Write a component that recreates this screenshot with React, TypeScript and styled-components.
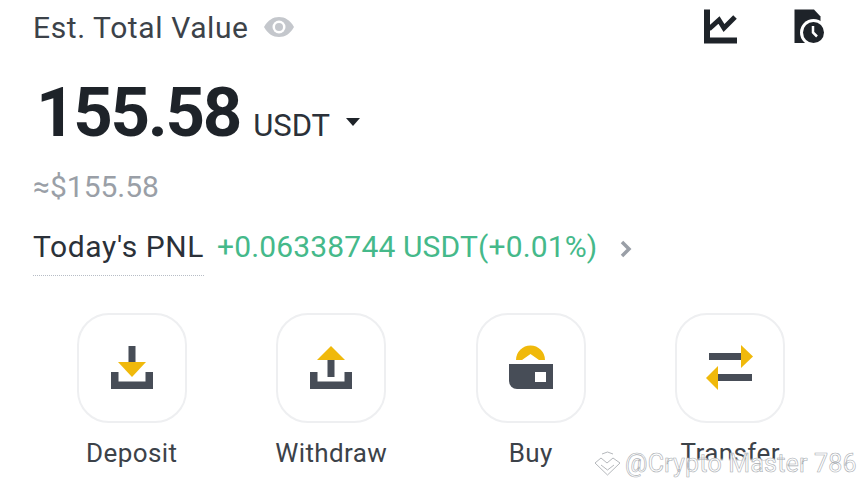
import styled, { createGlobalStyle } from "styled-components";

const GlobalStyle = createGlobalStyle`
  html, body {
    margin: 0;
    padding: 0;
    background: #fff;
  }
`;

const Page = styled.div`
  position: relative;
  width: 863px;
  height: 485px;
  overflow: hidden;
  font-family: Roboto, sans-serif;
  color: #1e2329;
`;

const Header = styled.div`
  display: flex;
  align-items: center;
  height: 56px;
  padding-left: 33px;
`;

const Title = styled.div`
  font-size: 30px;
  line-height: 56px;
  color: #3c4249;
  letter-spacing: 0.6px;
`;

const EyeIcon = styled.svg`
  width: 32px;
  height: 24px;
  margin: 0 0 2px 14px;
`;

const HeaderIcons = styled.div`
  display: flex;
  gap: 53px;
  margin: 0 0 2px auto;
  padding-right: 35px;
`;

const HeaderIcon = styled.svg`
  width: 36px;
  height: 36px;
`;

const BalanceRow = styled.div`
  display: flex;
  align-items: baseline;
  height: 84px;
  padding: 15px 0 0 36px;
`;

const Balance = styled.div`
  font-size: 69px;
  line-height: 84px;
  font-weight: 700;
  letter-spacing: -2.3px;
`;

const Unit = styled.div`
  font-size: 31px;
  margin-left: 13px;
  color: #2b3139;
`;

const Caret = styled.svg`
  align-self: flex-start;
  width: 16px;
  height: 10px;
  margin: 46px 0 0 15px;
`;

const Fiat = styled.div`
  margin: 11px 0 0 33px;
  font-size: 30px;
  line-height: 42px;
  color: #9a9fa7;
`;

const PnlRow = styled.div`
  display: flex;
  align-items: flex-start;
  margin: 17px 0 0 33px;
`;

const PnlLabel = styled.div`
  padding-bottom: 6px;
  font-size: 30px;
  line-height: 44px;
  letter-spacing: 0.6px;
  border-bottom: 1px dotted #b7bdc6;
  color: #2b3139;
`;

const PnlValue = styled.div`
  margin-left: 13px;
  font-size: 30px;
  line-height: 44px;
  letter-spacing: 0.15px;
  color: #45b98a;
`;

const Chevron = styled.svg`
  width: 14px;
  height: 18px;
  margin: 15px 0 0 22px;
`;

const Actions = styled.div`
  display: grid;
  grid-template-columns: repeat(4, 199.5px);
  margin: 37px 0 0 32px;
`;

const Action = styled.div`
  display: flex;
  flex-direction: column;
  align-items: center;
`;

const ActionButton = styled.div`
  display: flex;
  align-items: center;
  justify-content: center;
  box-sizing: border-box;
  width: 110px;
  height: 110px;
  border: 2px solid #eeeff1;
  border-radius: 32px;
`;

const ActionIcon = styled.svg`
  width: 50px;
  height: 50px;
`;

const ActionLabel = styled.div`
  margin-top: 12px;
  font-size: 26px;
  line-height: 36px;
  color: #3c4249;
  letter-spacing: 0.4px;
`;

const Watermark = styled.div`
  position: absolute;
  left: 593px;
  top: 449px;
  display: flex;
  align-items: center;
  gap: 3px;
`;

const WatermarkText = styled.div`
  font-size: 25px;
  line-height: 30px;
  color: rgba(255, 255, 255, 0.9);
  -webkit-text-stroke: 0.6px #a9adb2;
  background: linear-gradient(to bottom, transparent 9px, #fff 12px);
  letter-spacing: 0.2px;
  white-space: nowrap;
`;

const WatermarkLogo = styled.svg`
  width: 29px;
  height: 26px;
`;

const DARK = "#474d57";
const GOLD = "#f0b90b";

const TRAY = "M4 29h7.500v9.500h27V29H46v17H4z";

const actions = [
  {
    label: "Deposit",
    icon: (
      <>
        <rect x="21.500" y="3" width="7" height="17" fill={DARK} />
        <path d={TRAY} fill={DARK} />
        <path d="M11 19h28L25 34z" fill={GOLD} />
      </>
    ),
  },
  {
    label: "Withdraw",
    icon: (
      <>
        <rect x="21.500" y="16" width="7" height="18" fill={DARK} />
        <path d={TRAY} fill={DARK} />
        <path d="M11 17h28L25 3z" fill={GOLD} />
      </>
    ),
  },
  {
    label: "Buy",
    icon: (
      <>
        <path d="M10 17a14.500 14.500 0 0 1 29 0h-6l-8.500-6-8.500 6z" fill={GOLD} />
        <path d="M3 21h44v25H11a8 8 0 0 1-8-8z" fill={DARK} />
        <rect x="29" y="29" width="11" height="10" fill="#fff" />
      </>
    ),
  },
  {
    label: "Transfer",
    icon: (
      <>
        <rect x="4" y="10" width="33" height="7" fill={DARK} />
        <path d="M36 2l12 11.500L36 25z" fill={GOLD} />
        <rect x="13" y="31" width="34" height="7" fill={DARK} />
        <path d="M13 23L1 35l12 12z" fill={GOLD} />
      </>
    ),
  },
];

const App = () => (
  <Page>
    <GlobalStyle />
    <Header>
      <Title>Est. Total Value</Title>
      <EyeIcon viewBox="0 0 32 24">
        <path
          d="M1 12C5 5 10 2 16 2s11 3 15 10c-4 7-9 10-15 10S5 19 1 12z"
          fill="#c4c7cc"
        />
        <circle cx="16" cy="12" r="6.500" fill="#fff" />
        <circle cx="16" cy="12" r="4" fill="#c4c7cc" />
      </EyeIcon>
      <HeaderIcons>
        <HeaderIcon viewBox="0 0 36 36">
          <path d="M1 .5h6v28h27v6H1z" fill="#1e2329" />
          <path
            d="M6 20l10-9 5 8 11-11"
            fill="none"
            stroke="#1e2329"
            strokeWidth="5"
          />
        </HeaderIcon>
        <HeaderIcon viewBox="0 0 36 36">
          <path d="M2.500.5H22l6.500 7V34h-26z" fill="#1e2329" />
          <circle cx="21.500" cy="23.500" r="13.500" fill="#fff" />
          <circle cx="21.500" cy="23.500" r="10.500" fill="#1e2329" />
          <path d="M21 17v6.500l4 4" fill="none" stroke="#fff" strokeWidth="2.500" />
        </HeaderIcon>
      </HeaderIcons>
    </Header>
    <BalanceRow>
      <Balance>155.58</Balance>
      <Unit>USDT</Unit>
      <Caret viewBox="0 0 16 10">
        <path d="M1 1h14L8 9z" fill="#1e2329" />
      </Caret>
    </BalanceRow>
    <Fiat>≈$155.58</Fiat>
    <PnlRow>
      <PnlLabel>Today's PNL</PnlLabel>
      <PnlValue>+0.06338744 USDT(+0.01%)</PnlValue>
      <Chevron viewBox="0 0 14 18">
        <path d="M3 2l7 7-7 7" fill="none" stroke="#9a9fa7" strokeWidth="3.500" />
      </Chevron>
    </PnlRow>
    <Actions>
      {actions.map((action) => (
        <Action key={action.label}>
          <ActionButton>
            <ActionIcon viewBox="0 0 50 50">{action.icon}</ActionIcon>
          </ActionButton>
          <ActionLabel>{action.label}</ActionLabel>
        </Action>
      ))}
    </Actions>
    <Watermark>
      <WatermarkLogo viewBox="0 0 29 26" fill="none" stroke="#b5b8bc" strokeWidth="1">
        <path d="M2 12l6-5 6 5 6-5 7 5-12.500 12z" />
        <path d="M9 3l5.500-2 5.500 2M8 14l6.500 5 6.500-5" />
      </WatermarkLogo>
      <WatermarkText>@Crypto Master 786</WatermarkText>
    </Watermark>
  </Page>
);

export default App;
